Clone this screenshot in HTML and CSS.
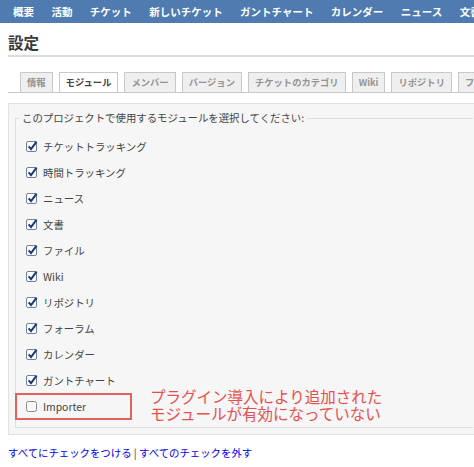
FILE: index.html
```html
<!DOCTYPE html>
<html lang="ja">
<head>
  <meta charset="UTF-8" />
  <title>設定 - モジュール</title>
  <link rel="stylesheet" href="styles.css">
</head>
<body>
  <div class="main-menu">
    <a href="#">概要</a>
    <a href="#">活動</a>
    <a href="#">チケット</a>
    <a href="#">新しいチケット</a>
    <a href="#">ガントチャート</a>
    <a href="#">カレンダー</a>
    <a href="#">ニュース</a>
    <a href="#">文書</a>
  </div>

  <div class="content">
    <h2>設定</h2>

    <div class="tabs">
      <a href="#">情報</a>
      <a href="#" class="selected">モジュール</a>
      <a href="#">メンバー</a>
      <a href="#">バージョン</a>
      <a href="#">チケットのカテゴリ</a>
      <a href="#">Wiki</a>
      <a href="#">リポジトリ</a>
      <a href="#">フォーラム</a>
    </div>

    <div class="box">
      <fieldset>
        <legend>このプロジェクトで使用するモジュールを選択してください:</legend>

        <div class="item"><label><svg class="cb" width="13" height="13" viewBox="0 0 13 13"><rect x="0.5" y="1.5" width="10" height="10" rx="1.5" fill="#fff" stroke="#6f82a3"/><path d="M2.6 6.4 L5 9.2 L10.6 1.6" fill="none" stroke="#1d3a72" stroke-width="2"/></svg>チケットトラッキング</label></div>
        <div class="item"><label><svg class="cb" width="13" height="13" viewBox="0 0 13 13"><rect x="0.5" y="1.5" width="10" height="10" rx="1.5" fill="#fff" stroke="#6f82a3"/><path d="M2.6 6.4 L5 9.2 L10.6 1.6" fill="none" stroke="#1d3a72" stroke-width="2"/></svg>時間トラッキング</label></div>
        <div class="item"><label><svg class="cb" width="13" height="13" viewBox="0 0 13 13"><rect x="0.5" y="1.5" width="10" height="10" rx="1.5" fill="#fff" stroke="#6f82a3"/><path d="M2.6 6.4 L5 9.2 L10.6 1.6" fill="none" stroke="#1d3a72" stroke-width="2"/></svg>ニュース</label></div>
        <div class="item"><label><svg class="cb" width="13" height="13" viewBox="0 0 13 13"><rect x="0.5" y="1.5" width="10" height="10" rx="1.5" fill="#fff" stroke="#6f82a3"/><path d="M2.6 6.4 L5 9.2 L10.6 1.6" fill="none" stroke="#1d3a72" stroke-width="2"/></svg>文書</label></div>
        <div class="item"><label><svg class="cb" width="13" height="13" viewBox="0 0 13 13"><rect x="0.5" y="1.5" width="10" height="10" rx="1.5" fill="#fff" stroke="#6f82a3"/><path d="M2.6 6.4 L5 9.2 L10.6 1.6" fill="none" stroke="#1d3a72" stroke-width="2"/></svg>ファイル</label></div>
        <div class="item"><label><svg class="cb" width="13" height="13" viewBox="0 0 13 13"><rect x="0.5" y="1.5" width="10" height="10" rx="1.5" fill="#fff" stroke="#6f82a3"/><path d="M2.6 6.4 L5 9.2 L10.6 1.6" fill="none" stroke="#1d3a72" stroke-width="2"/></svg>Wiki</label></div>
        <div class="item"><label><svg class="cb" width="13" height="13" viewBox="0 0 13 13"><rect x="0.5" y="1.5" width="10" height="10" rx="1.5" fill="#fff" stroke="#6f82a3"/><path d="M2.6 6.4 L5 9.2 L10.6 1.6" fill="none" stroke="#1d3a72" stroke-width="2"/></svg>リポジトリ</label></div>
        <div class="item"><label><svg class="cb" width="13" height="13" viewBox="0 0 13 13"><rect x="0.5" y="1.5" width="10" height="10" rx="1.5" fill="#fff" stroke="#6f82a3"/><path d="M2.6 6.4 L5 9.2 L10.6 1.6" fill="none" stroke="#1d3a72" stroke-width="2"/></svg>フォーラム</label></div>
        <div class="item"><label><svg class="cb" width="13" height="13" viewBox="0 0 13 13"><rect x="0.5" y="1.5" width="10" height="10" rx="1.5" fill="#fff" stroke="#6f82a3"/><path d="M2.6 6.4 L5 9.2 L10.6 1.6" fill="none" stroke="#1d3a72" stroke-width="2"/></svg>カレンダー</label></div>
        <div class="item"><label><svg class="cb" width="13" height="13" viewBox="0 0 13 13"><rect x="0.5" y="1.5" width="10" height="10" rx="1.5" fill="#fff" stroke="#6f82a3"/><path d="M2.6 6.4 L5 9.2 L10.6 1.6" fill="none" stroke="#1d3a72" stroke-width="2"/></svg>ガントチャート</label></div>
        <div class="item importer">
          <span class="frame"></span>
          <label><svg class="cb" width="13" height="13" viewBox="0 0 13 13"><rect x="0.5" y="1.5" width="10" height="10" rx="2" fill="#f7f7f7" stroke="#8a8a8a"/></svg>Importer</label>
          <div class="note">
            <span>プラグイン導入により追加された</span>
            <span>モジュールが有効になっていない</span>
          </div>
        </div>
      </fieldset>
    </div>

    <p class="links"><a href="#">すべてにチェックをつける</a> | <a href="#">すべてのチェックを外す</a></p>
  </div>
</body>
</html>
```

FILE: styles.css
```css
body {
  margin: 0;
  padding: 0;
  background-color: #fff;
  color: #333;
  font-family: "Noto Sans CJK JP", "Noto Sans", sans-serif;
  font-size: 10.4px;
  overflow: hidden;
}

a {
  text-decoration: none;
}

.main-menu {
  display: flex;
  gap: 17.4px;
  height: 23px;
  align-items: center;
  padding-left: 13px;
  background-color: #4f7bb0;
  white-space: nowrap;
  overflow: hidden;
}

.main-menu a {
  color: #fff;
  font-weight: bold;
  font-size: 10.5px;
}

.content {
  padding-left: 8px;
}

h2 {
  margin: 9px 0 0 0;
  font-size: 15.5px;
  line-height: 20px;
  padding-bottom: 3px;
  border-bottom: 2px solid #dcdcdc;
  color: #3a3a3a;
}

.tabs {
  display: flex;
  gap: 6px;
  margin-top: 15px;
  padding-left: 12px;
  border-bottom: 1px solid #c8c8c8;
  white-space: nowrap;
  overflow: hidden;
}

.tabs a {
  display: block;
  padding: 0 6px;
  line-height: 19px;
  font-size: 9.3px;
  font-weight: bold;
  color: #949494;
  background-color: #efefef;
  border: 1px solid #c8c8c8;
  border-bottom: none;
}

.tabs a.selected {
  color: #444;
  background-color: #fff;
  margin-bottom: -1px;
  padding-bottom: 1px;
}

.box {
  margin-top: 10px;
  margin-right: -6px;
  padding: 6px;
  background-color: #f6f6f6;
  border: 1px solid #e2e2e2;
}

fieldset {
  margin: 0;
  padding: 0 3px 8px 3px;
  border: 1px solid #dedede;
  border-right: none;
}

legend {
  padding: 0 3px;
  line-height: 16px;
  color: #444;
}

.item {
  display: flex;
  align-items: center;
  height: 26px;
  margin-left: 7px;
  color: #444;
}

.item label {
  display: flex;
  align-items: center;
  gap: 4px;
}

.item:first-of-type {
  margin-top: 7px;
}

.importer {
  position: relative;
}

.frame {
  position: absolute;
  left: -11px;
  top: 0;
  width: 113px;
  height: 23px;
  border: 2px solid #e2625c;
}

.note {
  position: absolute;
  left: 124px;
  top: -5px;
  display: flex;
  flex-direction: column;
  font-size: 15.5px;
  line-height: 17px;
  color: #e5504e;
  white-space: nowrap;
}
```
